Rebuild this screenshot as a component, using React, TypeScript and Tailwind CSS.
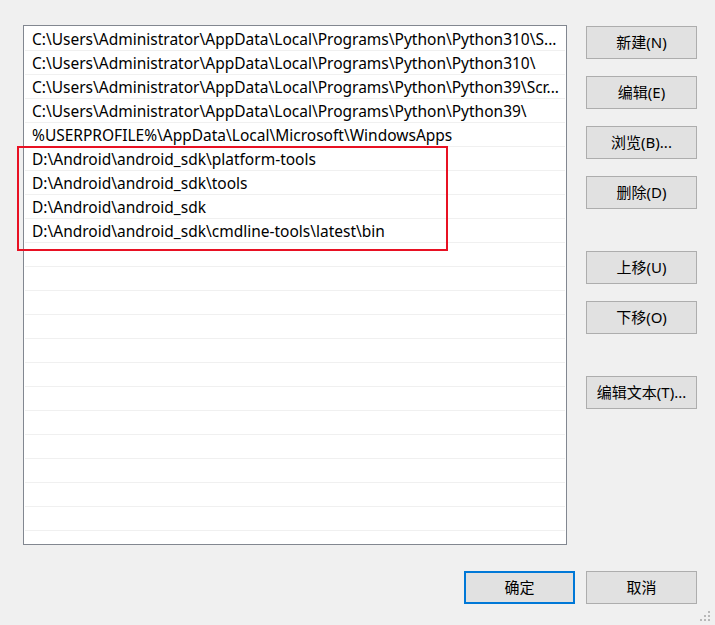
const rows = [
  "C:\\Users\\Administrator\\AppData\\Local\\Programs\\Python\\Python310\\S...",
  "C:\\Users\\Administrator\\AppData\\Local\\Programs\\Python\\Python310\\",
  "C:\\Users\\Administrator\\AppData\\Local\\Programs\\Python\\Python39\\Scr...",
  "C:\\Users\\Administrator\\AppData\\Local\\Programs\\Python\\Python39\\",
  "%USERPROFILE%\\AppData\\Local\\Microsoft\\WindowsApps",
  "D:\\Android\\android_sdk\\platform-tools",
  "D:\\Android\\android_sdk\\tools",
  "D:\\Android\\android_sdk",
  "D:\\Android\\android_sdk\\cmdline-tools\\latest\\bin",
];

const font = { fontFamily: '"Noto Sans", "Noto Sans CJK SC", sans-serif' };

function Btn({ label, primary }: { label: string; primary?: boolean }) {
  return (
    <button
      className={
        "w-[111px] h-[33px] bg-[#e1e1e1] text-[15px] text-black flex items-center justify-center " +
        (primary ? "border-2 border-[#0078d7]" : "border border-[#adadad]")
      }
    >
      {label}
    </button>
  );
}

export default function App() {
  const all = [...rows, ...Array(12).fill("")];

  return (
    <div className="w-[715px] h-[625px] bg-[#f0f0f0] relative flex flex-col" style={font}>
      <div className="flex pt-[25px] pl-[23px]">
        <div className="relative w-[544px] h-[520px] border border-[#828790] bg-white pt-[1px] px-[1px]">
          {all.map((t, i) => (
            <div
              key={i}
              className="h-[24px] border-b border-[#f0f0f0] pl-[7px] text-[15.5px] leading-[24px] text-black whitespace-nowrap"
            >
              {t}
            </div>
          ))}
          <div className="absolute left-[-7px] top-[120px] w-[431px] h-[105px] border-2 border-[#e81123]" />
        </div>

        <div className="ml-[19px] pt-[1px] flex flex-col gap-[17px]">
          <Btn label="新建(N)" />
          <Btn label="编辑(E)" />
          <Btn label="浏览(B)..." />
          <Btn label="删除(D)" />
          <div className="h-[8px]" />
          <Btn label="上移(U)" />
          <Btn label="下移(O)" />
          <div className="h-[8px]" />
          <Btn label="编辑文本(T)..." />
        </div>
      </div>

      <div className="flex justify-end gap-[11px] pr-[18px] mt-[26px]">
        <Btn label="确定" primary />
        <Btn label="取消" />
      </div>

      <svg className="absolute right-[3px] bottom-[2px]" width="12" height="12" viewBox="0 0 12 12">
        <rect x="8" y="0" width="2" height="2" fill="#b8b8b8" />
        <rect x="4" y="4" width="2" height="2" fill="#b8b8b8" />
        <rect x="8" y="4" width="2" height="2" fill="#b8b8b8" />
        <rect x="0" y="8" width="2" height="2" fill="#b8b8b8" />
        <rect x="4" y="8" width="2" height="2" fill="#b8b8b8" />
        <rect x="8" y="8" width="2" height="2" fill="#b8b8b8" />
      </svg>
    </div>
  );
}
